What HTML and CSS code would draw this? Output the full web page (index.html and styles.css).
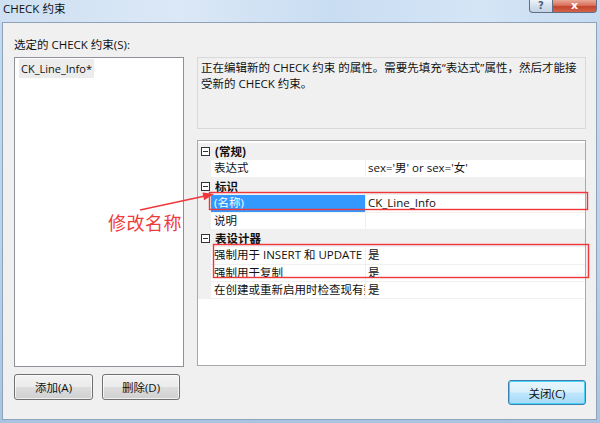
FILE: index.html
```html
<!DOCTYPE html>
<html lang="zh-CN">
<head>
<meta charset="utf-8">
<title>CHECK 约束</title>
<link rel="stylesheet" href="styles.css">
</head>
<body>
<div class="window">
  <div class="titlebar">
    <span class="title">CHECK 约束</span>
    <span class="caption-btns">
      <span class="cap help">?</span>
      <span class="cap close">x</span>
    </span>
  </div>
  <div class="panel">
    <div class="label">选定的 CHECK 约束(S):</div>
    <div class="main">
      <div class="list">
        <div class="item">CK_Line_Info*</div>
      </div>
      <div class="right">
        <div class="desc">正在编辑新的 CHECK 约束 的属性。需要先填充“表达式”属性，然后才能接<br>受新的 CHECK 约束。</div>
        <div class="grid">
          <div class="row cat"><span class="gut"><i class="box"></i></span><span class="cname">(常规)</span></div>
          <div class="row prop"><span class="gut"></span><span class="name">表达式</span><span class="val">sex='男' or sex='女'</span></div>
          <div class="row cat"><span class="gut"><i class="box"></i></span><span class="cname">标识</span></div>
          <div class="row prop sel"><span class="gut"></span><span class="name">(名称)</span><span class="val">CK_Line_Info</span></div>
          <div class="row prop"><span class="gut"></span><span class="name">说明</span><span class="val"></span></div>
          <div class="row cat"><span class="gut"><i class="box"></i></span><span class="cname">表设计器</span></div>
          <div class="row prop"><span class="gut"></span><span class="name">强制用于 INSERT 和 UPDATE</span><span class="val">是</span></div>
          <div class="row prop"><span class="gut"></span><span class="name">强制用于复制</span><span class="val">是</span></div>
          <div class="row prop"><span class="gut"></span><span class="name">在创建或重新启用时检查现有数据</span><span class="val">是</span></div>
        </div>
      </div>
    </div>
    <div class="buttons">
      <span class="btn">添加(A)</span>
      <span class="btn del">删除(D)</span>
      <span class="btn default">关闭(C)</span>
    </div>
  </div>
</div>
<svg class="marks" width="600" height="423" viewBox="0 0 600 423">
  <rect x="209.5" y="192.5" width="378" height="17" fill="none" stroke="#f0363a" stroke-width="1.4"/>
  <rect x="213.5" y="244.5" width="375" height="33" fill="none" stroke="#f0363a" stroke-width="1.4"/>
  <line x1="140" y1="210" x2="205" y2="196" stroke="#f0363a" stroke-width="1.3"/>
  <polygon points="214,194 204.1,200.2 202.5,192.4" fill="#f0363a"/>
</svg>
<span class="note">修改名称</span>
</body>
</html>
```

FILE: styles.css
```css
html, body {
  margin: 0;
  padding: 0;
}
body {
  width: 600px;
  height: 423px;
  overflow: hidden;
  position: relative;
  background: linear-gradient(180deg, #c4daf1 0%, #b9d2ec 60%, #a9c4e2 100%);
  font-family: "Open Sans", "Noto Sans CJK SC", sans-serif;
  font-size: 11.5px;
  color: #000;
}
.window {
  display: flex;
  flex-direction: column;
  height: 423px;
}
.titlebar {
  height: 22px;
  display: flex;
  align-items: flex-start;
  background: linear-gradient(90deg, #cfe0f2 0%, #dbe8f6 30%, #c9ddf2 55%, #d4e5f6 80%, #c6dbf1 100%);
}
.title {
  padding-left: 3px;
  line-height: 18px;
  color: #111;
}
.caption-btns {
  margin-left: auto;
  margin-right: 3px;
  display: flex;
}
.cap {
  height: 13px;
  box-sizing: border-box;
  border: 1px solid #5e6f86;
  border-top: none;
  display: flex;
  align-items: center;
  justify-content: center;
  font-family: "DejaVu Sans", sans-serif;
  font-weight: bold;
  font-size: 10px;
  line-height: 10px;
}
.help {
  width: 24px;
  border-radius: 0 0 0 4px;
  background: linear-gradient(180deg, #eef3f9 0%, #d4dfec 50%, #c3d2e4 100%);
  color: #4a5e78;
}
.close {
  width: 44px;
  border-left: none;
  border-radius: 0 0 4px 0;
  background: linear-gradient(180deg, #e9a897 0%, #d8705a 45%, #c5442c 55%, #d2634a 100%);
  color: #fff;
  font-size: 11px;
}
.panel {
  height: 398px;
  margin: 0 3px 0 2px;
  box-sizing: border-box;
  border: 1px solid #8fa2b8;
  background: #f0f0f0;
  padding-left: 11px;
  display: flex;
  flex-direction: column;
}
.label {
  margin-top: 14px;
  line-height: 16px;
  height: 16px;
  color: #111;
}
.main {
  margin-top: 4px;
  display: flex;
  gap: 13px;
  height: 310px;
}
.list {
  width: 170px;
  height: 310px;
  box-sizing: border-box;
  border: 1px solid #8e9298;
  background: #fff;
  padding: 1px 0 0 4px;
}
.item {
  display: inline-block;
  height: 19px;
  line-height: 19px;
  padding: 0 2px 0 2px;
  font-size: 11px;
  background: #ececec;
  color: #111;
}
.right {
  width: 389px;
  display: flex;
  flex-direction: column;
}
.desc {
  height: 72px;
  box-sizing: border-box;
  border: 1px solid #d9d9d9;
  background: #f0f0f0;
  padding: 2px 0 0 3px;
  line-height: 16px;
  white-space: nowrap;
  overflow: hidden;
  color: #111;
}
.grid {
  margin-top: 11px;
  height: 226px;
  box-sizing: border-box;
  border: 1px solid #a8a8a8;
  background: #fff;
  padding-top: 2px;
}
.row {
  display: grid;
  grid-template-columns: 13px 154px 1fr;
  height: 17.375px;
}
.cat {
  background: #f0f0f0;
}
.gut {
  background: #f0f0f0;
  display: flex;
  align-items: center;
  justify-content: center;
  padding-left: 2px;
  box-sizing: border-box;
}
.box {
  width: 9px;
  height: 9px;
  box-sizing: border-box;
  border: 1px solid #333;
  position: relative;
  background: #fff;
}
.box::after {
  content: "";
  position: absolute;
  left: 1px;
  right: 1px;
  top: 3px;
  height: 1px;
  background: #333;
}
.cname {
  grid-column: 2 / 4;
  padding-left: 4px;
  font-weight: bold;
  line-height: 17px;
  color: #111;
}
.name, .val {
  box-sizing: border-box;
  border-bottom: 1px solid #f0f0f0;
  line-height: 16px;
  white-space: nowrap;
  overflow: hidden;
  color: #111;
}
.name {
  padding-left: 3px;
}
.val {
  border-left: 1px solid #f0f0f0;
  padding-left: 2px;
}
.sel .name {
  background: #3399ff;
  color: #fff;
}
.buttons {
  display: flex;
  align-items: flex-start;
  padding-top: 7px;
}
.btn {
  width: 79px;
  height: 26px;
  box-sizing: border-box;
  border: 1px solid #707070;
  border-radius: 3px;
  background: linear-gradient(180deg, #f3f3f3 0%, #ebebeb 48%, #dddddd 52%, #d0d0d0 100%);
  box-shadow: inset 0 0 0 1px rgba(255,255,255,0.7);
  display: flex;
  align-items: center;
  justify-content: center;
  color: #111;
}
.del {
  width: 78px;
  margin-left: 9px;
}
.default {
  width: 78px;
  height: 25px;
  margin-left: auto;
  margin-right: 10px;
  margin-top: 6px;
  border-color: #3c7fb1;
  background: linear-gradient(180deg, #eaf6fd 0%, #d9f0fc 48%, #bee6fd 52%, #a7d9f5 100%);
  box-shadow: inset 0 0 0 1px #48d0f5;
}
.marks {
  position: absolute;
  left: 0;
  top: 0;
  pointer-events: none;
}
.note {
  position: absolute;
  left: 108px;
  top: 211px;
  font-family: "Noto Sans CJK SC", sans-serif;
  font-size: 18px;
  line-height: 22px;
  color: #ee3b3b;
  letter-spacing: 0.5px;
}
```
